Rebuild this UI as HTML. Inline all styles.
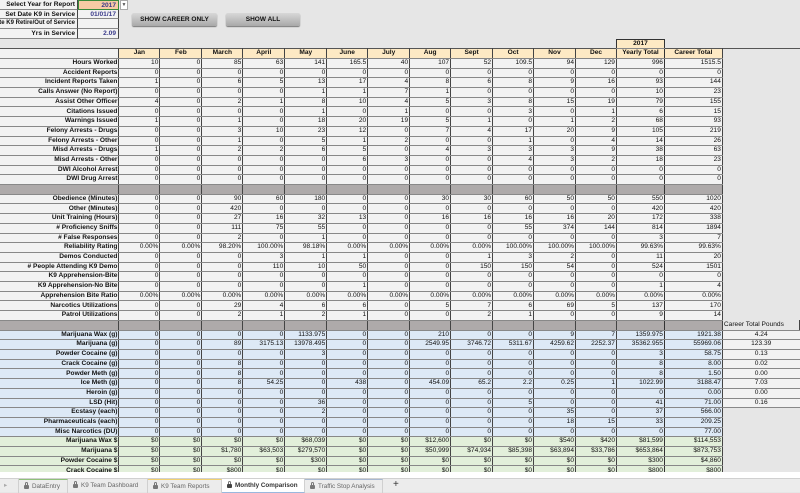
<!DOCTYPE html>
<html><head><meta charset="utf-8"><style>
*{margin:0;padding:0;box-sizing:border-box}
body{width:800px;height:492px;overflow:hidden;background:#e6e6e6;font-family:"Liberation Sans",sans-serif;position:relative}
.tl{position:absolute;font-size:6.6px;font-weight:bold;color:#111}
.tl div{position:absolute;height:9.7px;line-height:9.5px;white-space:nowrap}
.btn{position:absolute;height:13px;top:13px;background:linear-gradient(#d8d8d8,#a9a9a9);border-radius:2px;font-size:6.5px;font-weight:bold;text-align:center;line-height:13px;color:#111;box-shadow:0 1px 1px #777}
.wrap{position:absolute;left:0;top:38.5px;width:800px;height:433.5px;overflow:hidden}
table{border-collapse:collapse;table-layout:fixed;font-size:6.6px;color:#111}
td{height:9.71px;line-height:8.5px;padding:0 1px;text-align:right;border-right:1px solid #444;border-bottom:1px solid #888;white-space:nowrap;overflow:hidden;background:#f2f2f2}
td:first-child{font-weight:bold;padding-right:1px}
td.y{border-left:1.5px solid #333;border-right:1.5px solid #333}
tr.h td{background:#fde9c4;text-align:center;font-weight:bold;border-top:1px solid #555}
tr.g td{background:#aeaaaa}
tr.b td{background:#dde9f6}
tr.gr td{background:#e2efda}
td.n{background:#e6e6e6!important;border:none}
td.p{text-align:center;font-weight:normal!important;background:#f2f2f2!important;border-right:none}
td.ph{text-align:left;background:#e6e6e6!important;font-weight:normal;border-bottom:1px solid #888}
.tabs{position:absolute;left:0;top:478px;width:800px;height:14px;background:#ececec;border-top:1px solid #d0d0d0;font-size:6.3px;color:#666}
.tab{position:absolute;top:0;height:14px;line-height:13px;padding-left:5px;border-right:1px solid #d0d0d0;white-space:nowrap;overflow:hidden}
.lk{display:inline-block;width:5px;height:4px;background:#777;border-radius:1px;margin-right:3px;position:relative;vertical-align:-0.5px}
.lk:before{content:"";position:absolute;left:1px;top:-2.5px;width:3px;height:3px;border:1px solid #777;border-bottom:none;border-radius:2px 2px 0 0;box-sizing:border-box}
</style></head><body>
<div class="tl" style="left:0;top:0;width:128px;height:39px">
<div style="left:0;top:0;width:78px;text-align:right;padding-right:2px;border-bottom:1px solid #888;border-right:1px solid #444;background:#f2f2f2">Select Year for Report</div>
<div style="left:78px;top:0;width:41px;text-align:right;padding-right:2px;background:#f8cba4;color:#3a3a8a;border:1px solid #3a8a3a">2017</div>
<div style="left:120px;top:0;width:8px;background:#fff;border:1px solid #aaa;font-size:5px;text-align:center;color:#555">▼</div>
<div style="left:0;top:9.7px;width:78px;text-align:right;padding-right:2px;border-bottom:1px solid #888;border-right:1px solid #444;background:#f2f2f2">Set Date K9 in Service</div>
<div style="left:78px;top:9.7px;width:41px;text-align:right;padding-right:2px;color:#3a3a8a;border-bottom:1px solid #888;border-right:1px solid #444;background:#f2f2f2">01/01/17</div>
<div style="left:0;top:19.4px;width:78px;text-align:right;padding-right:2px;border-bottom:1px solid #888;border-right:1px solid #444;background:#f2f2f2;overflow:hidden;font-size:6px;direction:rtl">Date K9 Retire/Out of Service</div>
<div style="left:78px;top:19.4px;width:41px;border-bottom:1px solid #888;border-right:1px solid #444;background:#f2f2f2"></div>
<div style="left:0;top:29.1px;width:78px;text-align:right;padding-right:2px;border-bottom:1px solid #888;border-right:1px solid #444;background:#f2f2f2">Yrs in Service</div>
<div style="left:78px;top:29.1px;width:41px;text-align:right;padding-right:2px;color:#3a3a8a;border-bottom:1px solid #888;border-right:1px solid #444;background:#f2f2f2">2.09</div>
</div>
<div class="btn" style="left:132px;width:85px">SHOW CAREER ONLY</div>
<div class="btn" style="left:226px;width:74px">SHOW ALL</div>
<div class="wrap"><table>
<colgroup><col style="width:119px"><col style="width:41px"><col style="width:42px"><col style="width:41px"><col style="width:42px"><col style="width:42px"><col style="width:41px"><col style="width:42px"><col style="width:41px"><col style="width:42px"><col style="width:41px"><col style="width:42px"><col style="width:41px"><col style="width:48px"><col style="width:58px"><col style="width:77px"></colgroup>
<tr><td class="n"></td><td class="n"></td><td class="n"></td><td class="n"></td><td class="n"></td><td class="n"></td><td class="n"></td><td class="n"></td><td class="n"></td><td class="n"></td><td class="n"></td><td class="n"></td><td class="n"></td><td class="y" style="background:#fde9c4;text-align:center;font-weight:bold;border-top:1.5px solid #333">2017</td><td class="n"></td><td class="n"></td></tr>
<tr class="h"><td style="background:#f2f2f2"></td><td>Jan</td><td>Feb</td><td>March</td><td>April</td><td>May</td><td>June</td><td>July</td><td>Aug</td><td>Sept</td><td>Oct</td><td>Nov</td><td>Dec</td><td class="y">Yearly Total</td><td>Career Total</td><td class="n"></td></tr>
<tr><td>Hours Worked</td><td>10</td><td>0</td><td>85</td><td>63</td><td>141</td><td>165.5</td><td>40</td><td>107</td><td>52</td><td>109.5</td><td>94</td><td>129</td><td class="y">996</td><td>1515.5</td><td class="n"></td></tr>
<tr><td>Accident Reports</td><td>0</td><td>0</td><td>0</td><td>0</td><td>0</td><td>0</td><td>0</td><td>0</td><td>0</td><td>0</td><td>0</td><td>0</td><td class="y">0</td><td>0</td><td class="n"></td></tr>
<tr><td>Incident Reports Taken</td><td>1</td><td>0</td><td>6</td><td>5</td><td>13</td><td>17</td><td>4</td><td>8</td><td>6</td><td>8</td><td>9</td><td>16</td><td class="y">93</td><td>144</td><td class="n"></td></tr>
<tr><td>Calls Answer (No Report)</td><td>0</td><td>0</td><td>0</td><td>0</td><td>1</td><td>1</td><td>7</td><td>1</td><td>0</td><td>0</td><td>0</td><td>0</td><td class="y">10</td><td>23</td><td class="n"></td></tr>
<tr><td>Assist Other Officer</td><td>4</td><td>0</td><td>2</td><td>1</td><td>8</td><td>10</td><td>4</td><td>5</td><td>3</td><td>8</td><td>15</td><td>19</td><td class="y">79</td><td>155</td><td class="n"></td></tr>
<tr><td>Citations Issued</td><td>0</td><td>0</td><td>0</td><td>0</td><td>1</td><td>0</td><td>1</td><td>0</td><td>0</td><td>3</td><td>0</td><td>1</td><td class="y">6</td><td>15</td><td class="n"></td></tr>
<tr><td>Warnings Issued</td><td>1</td><td>0</td><td>1</td><td>0</td><td>18</td><td>20</td><td>19</td><td>5</td><td>1</td><td>0</td><td>1</td><td>2</td><td class="y">68</td><td>93</td><td class="n"></td></tr>
<tr><td>Felony Arrests - Drugs</td><td>0</td><td>0</td><td>3</td><td>10</td><td>23</td><td>12</td><td>0</td><td>7</td><td>4</td><td>17</td><td>20</td><td>9</td><td class="y">105</td><td>219</td><td class="n"></td></tr>
<tr><td>Felony Arrests - Other</td><td>0</td><td>0</td><td>1</td><td>0</td><td>5</td><td>1</td><td>2</td><td>0</td><td>0</td><td>1</td><td>0</td><td>4</td><td class="y">14</td><td>26</td><td class="n"></td></tr>
<tr><td>Misd Arrests - Drugs</td><td>1</td><td>0</td><td>2</td><td>2</td><td>6</td><td>5</td><td>0</td><td>4</td><td>3</td><td>3</td><td>3</td><td>9</td><td class="y">38</td><td>63</td><td class="n"></td></tr>
<tr><td>Misd Arrests - Other</td><td>0</td><td>0</td><td>0</td><td>0</td><td>0</td><td>6</td><td>3</td><td>0</td><td>0</td><td>4</td><td>3</td><td>2</td><td class="y">18</td><td>23</td><td class="n"></td></tr>
<tr><td>DWI Alcohol Arrest</td><td>0</td><td>0</td><td>0</td><td>0</td><td>0</td><td>0</td><td>0</td><td>0</td><td>0</td><td>0</td><td>0</td><td>0</td><td class="y">0</td><td>0</td><td class="n"></td></tr>
<tr><td>DWI Drug Arrest</td><td>0</td><td>0</td><td>0</td><td>0</td><td>0</td><td>0</td><td>0</td><td>0</td><td>0</td><td>0</td><td>0</td><td>0</td><td class="y">0</td><td>0</td><td class="n"></td></tr>
<tr class="g"><td></td><td></td><td></td><td></td><td></td><td></td><td></td><td></td><td></td><td></td><td></td><td></td><td></td><td class="y"></td><td></td><td class="n"></td></tr>
<tr><td>Obedience (Minutes)</td><td>0</td><td>0</td><td>90</td><td>60</td><td>180</td><td>0</td><td>0</td><td>30</td><td>30</td><td>60</td><td>50</td><td>50</td><td class="y">550</td><td>1020</td><td class="n"></td></tr>
<tr><td>Other (Minutes)</td><td>0</td><td>0</td><td>420</td><td>0</td><td>0</td><td>0</td><td>0</td><td>0</td><td>0</td><td>0</td><td>0</td><td>0</td><td class="y">420</td><td>420</td><td class="n"></td></tr>
<tr><td>Unit Training (Hours)</td><td>0</td><td>0</td><td>27</td><td>16</td><td>32</td><td>13</td><td>0</td><td>16</td><td>16</td><td>16</td><td>16</td><td>20</td><td class="y">172</td><td>338</td><td class="n"></td></tr>
<tr><td># Proficiency Sniffs</td><td>0</td><td>0</td><td>111</td><td>75</td><td>55</td><td>0</td><td>0</td><td>0</td><td>0</td><td>55</td><td>374</td><td>144</td><td class="y">814</td><td>1894</td><td class="n"></td></tr>
<tr><td># False Responses</td><td>0</td><td>0</td><td>2</td><td>0</td><td>1</td><td>0</td><td>0</td><td>0</td><td>0</td><td>0</td><td>0</td><td>0</td><td class="y">3</td><td>7</td><td class="n"></td></tr>
<tr><td>Reliability Rating</td><td>0.00%</td><td>0.00%</td><td>98.20%</td><td>100.00%</td><td>98.18%</td><td>0.00%</td><td>0.00%</td><td>0.00%</td><td>0.00%</td><td>100.00%</td><td>100.00%</td><td>100.00%</td><td class="y">99.63%</td><td>99.63%</td><td class="n"></td></tr>
<tr><td>Demos Conducted</td><td>0</td><td>0</td><td>0</td><td>3</td><td>1</td><td>1</td><td>0</td><td>0</td><td>1</td><td>3</td><td>2</td><td>0</td><td class="y">11</td><td>20</td><td class="n"></td></tr>
<tr><td># People Attending K9 Demo</td><td>0</td><td>0</td><td>0</td><td>110</td><td>10</td><td>50</td><td>0</td><td>0</td><td>150</td><td>150</td><td>54</td><td>0</td><td class="y">524</td><td>1501</td><td class="n"></td></tr>
<tr><td>K9 Apprehension-Bite</td><td>0</td><td>0</td><td>0</td><td>0</td><td>0</td><td>0</td><td>0</td><td>0</td><td>0</td><td>0</td><td>0</td><td>0</td><td class="y">0</td><td>0</td><td class="n"></td></tr>
<tr><td>K9 Apprehension-No Bite</td><td>0</td><td>0</td><td>0</td><td>0</td><td>0</td><td>1</td><td>0</td><td>0</td><td>0</td><td>0</td><td>0</td><td>0</td><td class="y">1</td><td>4</td><td class="n"></td></tr>
<tr><td>Apprehension Bite Ratio</td><td>0.00%</td><td>0.00%</td><td>0.00%</td><td>0.00%</td><td>0.00%</td><td>0.00%</td><td>0.00%</td><td>0.00%</td><td>0.00%</td><td>0.00%</td><td>0.00%</td><td>0.00%</td><td class="y">0.00%</td><td>0.00%</td><td class="n"></td></tr>
<tr><td>Narcotics Utilizations</td><td>0</td><td>0</td><td>29</td><td>4</td><td>6</td><td>6</td><td>0</td><td>5</td><td>7</td><td>6</td><td>69</td><td>5</td><td class="y">137</td><td>170</td><td class="n"></td></tr>
<tr><td>Patrol Utilizations</td><td>0</td><td>0</td><td>2</td><td>1</td><td>2</td><td>1</td><td>0</td><td>0</td><td>2</td><td>1</td><td>0</td><td>0</td><td class="y">9</td><td>14</td><td class="n"></td></tr>
<tr class="g"><td></td><td></td><td></td><td></td><td></td><td></td><td></td><td></td><td></td><td></td><td></td><td></td><td></td><td class="y"></td><td></td><td class="ph">Career Total Pounds</td></tr>
<tr class="b"><td>Marijuana Wax (g)</td><td>0</td><td>0</td><td>0</td><td>0</td><td>1133.975</td><td>0</td><td>0</td><td>210</td><td>0</td><td>0</td><td>9</td><td>7</td><td class="y">1359.975</td><td>1921.38</td><td class="p">4.24</td></tr>
<tr class="b"><td>Marijuana (g)</td><td>0</td><td>0</td><td>89</td><td>3175.13</td><td>13978.495</td><td>0</td><td>0</td><td>2549.95</td><td>3746.72</td><td>5311.67</td><td>4259.62</td><td>2252.37</td><td class="y">35362.955</td><td>55969.06</td><td class="p">123.39</td></tr>
<tr class="b"><td>Powder Cocaine (g)</td><td>0</td><td>0</td><td>0</td><td>0</td><td>3</td><td>0</td><td>0</td><td>0</td><td>0</td><td>0</td><td>0</td><td>0</td><td class="y">3</td><td>58.75</td><td class="p">0.13</td></tr>
<tr class="b"><td>Crack Cocaine (g)</td><td>0</td><td>0</td><td>8</td><td>0</td><td>0</td><td>0</td><td>0</td><td>0</td><td>0</td><td>0</td><td>0</td><td>0</td><td class="y">8</td><td>8.00</td><td class="p">0.02</td></tr>
<tr class="b"><td>Powder Meth (g)</td><td>0</td><td>0</td><td>8</td><td>0</td><td>0</td><td>0</td><td>0</td><td>0</td><td>0</td><td>0</td><td>0</td><td>0</td><td class="y">8</td><td>1.50</td><td class="p">0.00</td></tr>
<tr class="b"><td>Ice Meth (g)</td><td>0</td><td>0</td><td>8</td><td>54.25</td><td>0</td><td>438</td><td>0</td><td>454.09</td><td>65.2</td><td>2.2</td><td>0.25</td><td>1</td><td class="y">1022.99</td><td>3188.47</td><td class="p">7.03</td></tr>
<tr class="b"><td>Heroin (g)</td><td>0</td><td>0</td><td>0</td><td>0</td><td>0</td><td>0</td><td>0</td><td>0</td><td>0</td><td>0</td><td>0</td><td>0</td><td class="y">0</td><td>0.00</td><td class="p">0.00</td></tr>
<tr class="b"><td>LSD (Hit)</td><td>0</td><td>0</td><td>0</td><td>0</td><td>36</td><td>0</td><td>0</td><td>0</td><td>0</td><td>5</td><td>0</td><td>0</td><td class="y">41</td><td>71.00</td><td class="p">0.16</td></tr>
<tr class="b"><td>Ecstasy (each)</td><td>0</td><td>0</td><td>0</td><td>0</td><td>2</td><td>0</td><td>0</td><td>0</td><td>0</td><td>0</td><td>35</td><td>0</td><td class="y">37</td><td>566.00</td><td class="n"></td></tr>
<tr class="b"><td>Pharmaceuticals (each)</td><td>0</td><td>0</td><td>0</td><td>0</td><td>0</td><td>0</td><td>0</td><td>0</td><td>0</td><td>0</td><td>18</td><td>15</td><td class="y">33</td><td>209.25</td><td class="n"></td></tr>
<tr class="b"><td>Misc Narcotics (DU)</td><td>0</td><td>0</td><td>0</td><td>0</td><td>0</td><td>0</td><td>0</td><td>0</td><td>0</td><td>0</td><td>0</td><td>0</td><td class="y">0</td><td>77.00</td><td class="n"></td></tr>
<tr class="gr"><td>Marijuana Wax $</td><td>$0</td><td>$0</td><td>$0</td><td>$0</td><td>$68,039</td><td>$0</td><td>$0</td><td>$12,600</td><td>$0</td><td>$0</td><td>$540</td><td>$420</td><td class="y">$81,599</td><td>$114,553</td><td class="n"></td></tr>
<tr class="gr"><td>Marijuana $</td><td>$0</td><td>$0</td><td>$1,780</td><td>$63,503</td><td>$279,570</td><td>$0</td><td>$0</td><td>$50,999</td><td>$74,934</td><td>$85,398</td><td>$63,894</td><td>$33,786</td><td class="y">$653,864</td><td>$873,753</td><td class="n"></td></tr>
<tr class="gr"><td>Powder Cocaine $</td><td>$0</td><td>$0</td><td>$0</td><td>$0</td><td>$300</td><td>$0</td><td>$0</td><td>$0</td><td>$0</td><td>$0</td><td>$0</td><td>$0</td><td class="y">$300</td><td>$4,860</td><td class="n"></td></tr>
<tr class="gr"><td>Crack Cocaine $</td><td>$0</td><td>$0</td><td>$800</td><td>$0</td><td>$0</td><td>$0</td><td>$0</td><td>$0</td><td>$0</td><td>$0</td><td>$0</td><td>$0</td><td class="y">$800</td><td>$800</td><td class="n"></td></tr>
</table></div>
<div style="position:absolute;left:0;top:472px;width:800px;height:6px;background:#fff"></div>
<div class="tabs">
<div class="tab" style="left:0;width:19px;padding-left:4px;color:#aaa">▸</div>
<div class="tab" style="left:19px;width:49px;border-top:1.5px solid #8fc07a"><span class="lk"></span>DataEntry</div>
<div class="tab" style="left:68px;width:80px"><span class="lk"></span>K9 Team Dashboard</div>
<div class="tab" style="left:148px;width:74px;border-top:1.5px solid #f0d070"><span class="lk"></span>K9 Team Reports</div>
<div class="tab" style="left:222px;width:83px;background:#fff;color:#333;font-weight:bold;border-bottom:1.5px solid #9ab8de"><span class="lk" style="background:#444"></span>Monthly Comparison</div>
<div class="tab" style="left:305px;width:78px;border-top:1.5px solid #a8b8d0"><span class="lk"></span>Traffic Stop Analysis</div>
<div class="tab" style="left:388px;width:20px;border:none;font-size:10px;color:#333;line-height:12px">+</div>
</div>
</body></html>
